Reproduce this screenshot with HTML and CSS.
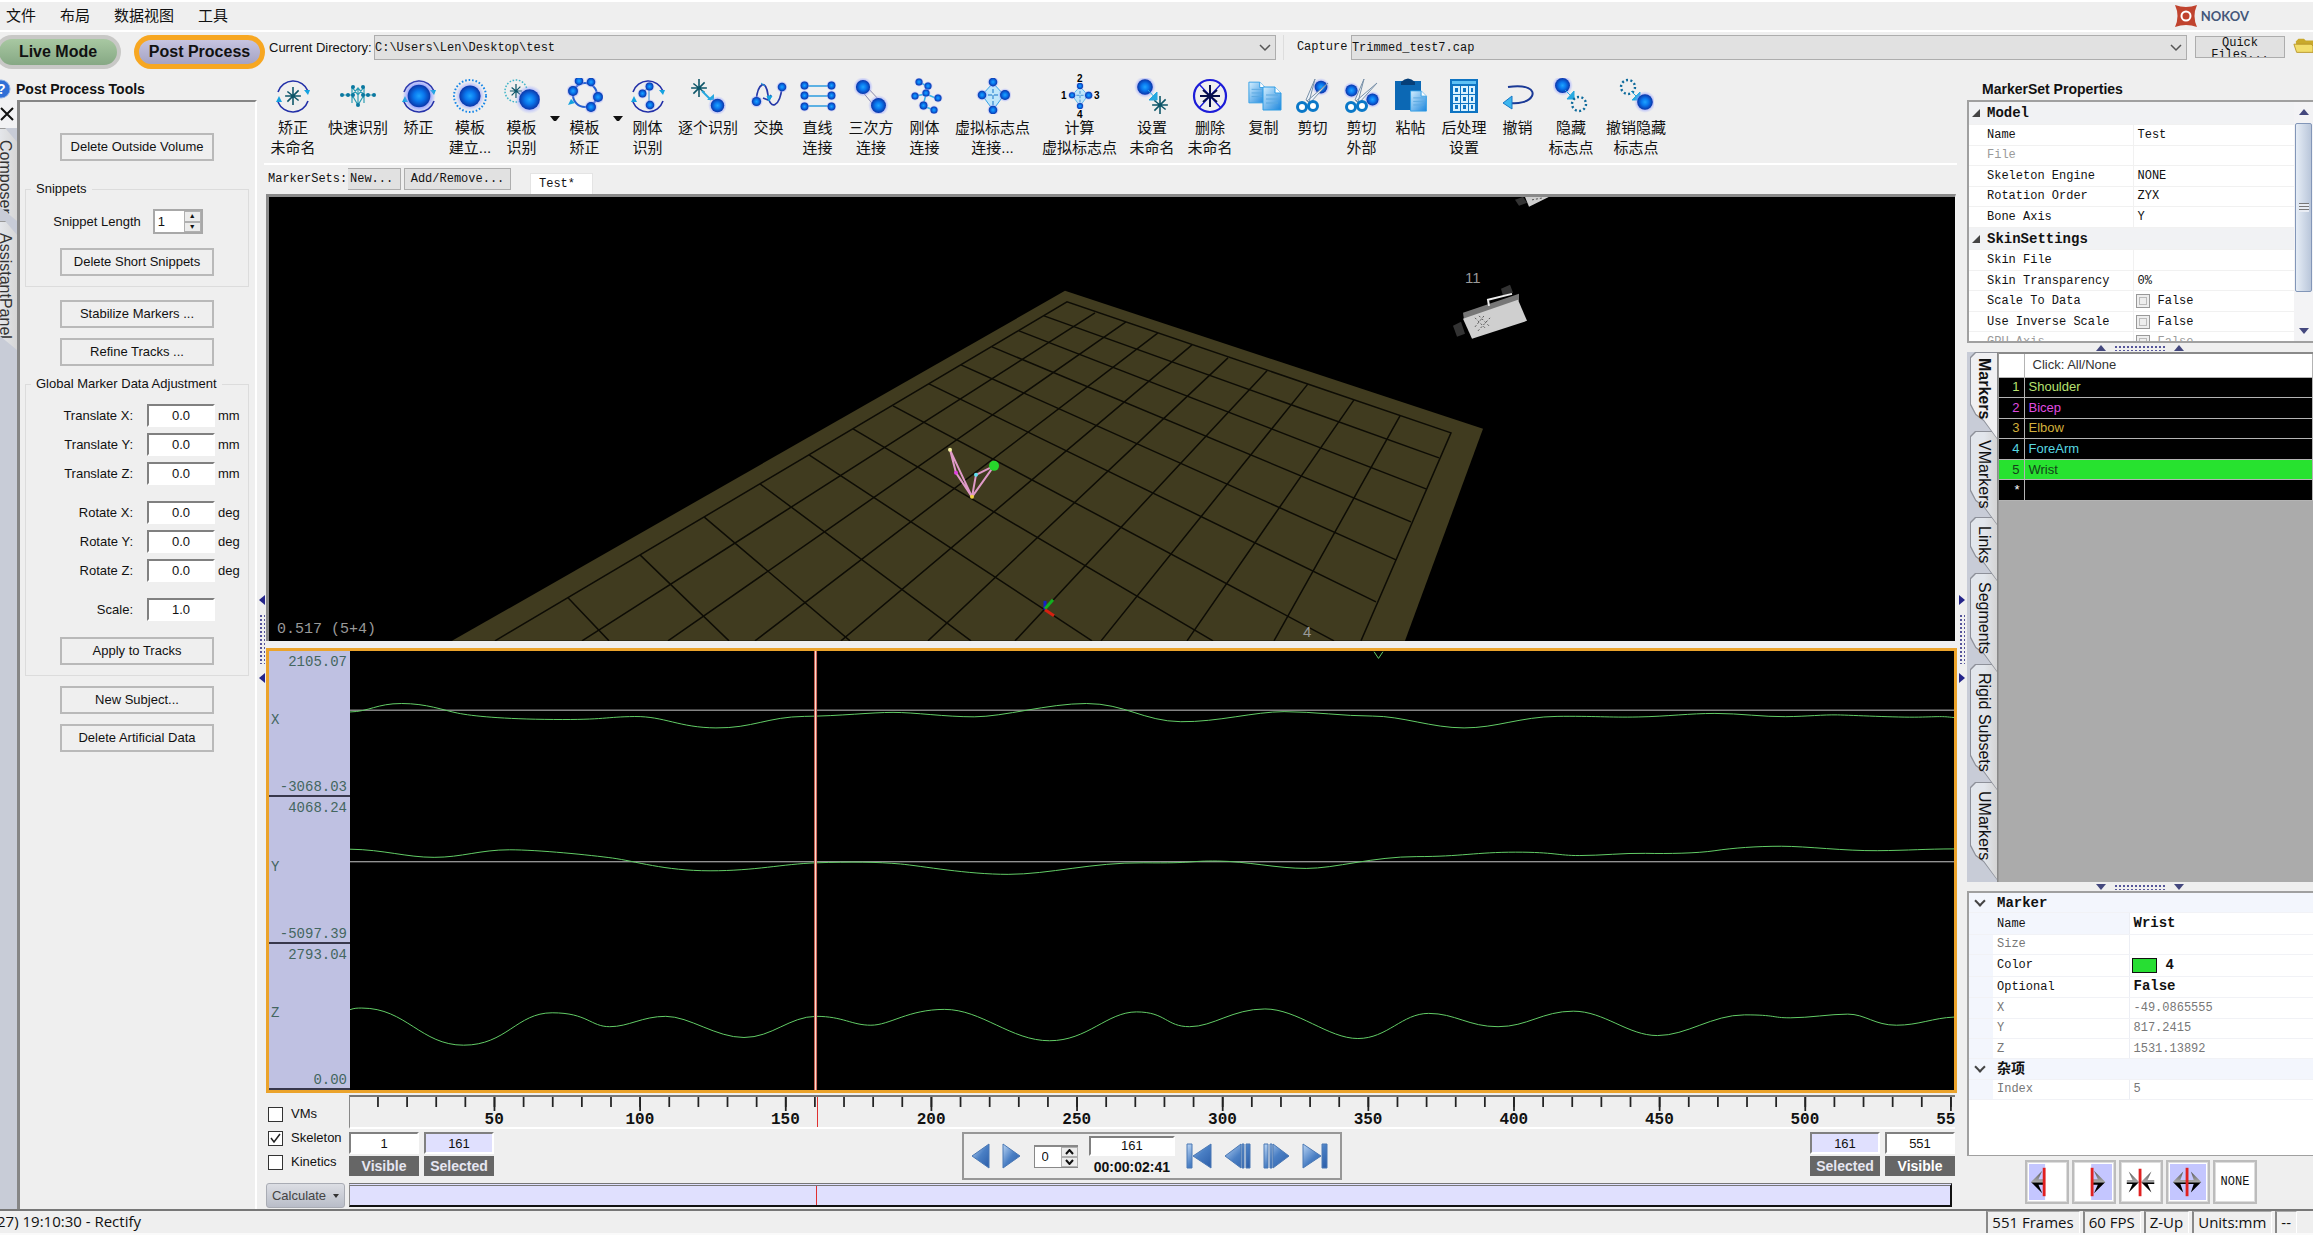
FILE: index.html
```html
<!DOCTYPE html>
<html lang="zh-CN">
<head>
<meta charset="utf-8">
<title>NOKOV Post Process</title>
<link rel="stylesheet" href="styles.css">
</head>
<body>
<svg class="defs" aria-hidden="true">
  <defs>
    <radialGradient id="ball"><stop offset="0" stop-color="#1ea4ff"/><stop offset=".45" stop-color="#0a78ee"/><stop offset="1" stop-color="#0a35a8"/></radialGradient>
    <radialGradient id="glow"><stop offset=".55" stop-color="#7f8cff" stop-opacity=".85"/><stop offset="1" stop-color="#a9b4ff" stop-opacity="0"/></radialGradient>
    <linearGradient id="sheet" x2="1" y2="1"><stop offset="0" stop-color="#d4efff"/><stop offset="1" stop-color="#1c86dd"/></linearGradient>
    <linearGradient id="play" x2="1" y2="1"><stop offset="0" stop-color="#bcd6f4"/><stop offset=".5" stop-color="#4a7fc4"/><stop offset="1" stop-color="#2b5da8"/></linearGradient>
    <linearGradient id="arrow" x2="0" y2="1"><stop offset="0" stop-color="#555"/><stop offset=".5" stop-color="#aaa"/><stop offset=".55" stop-color="#000"/></linearGradient>
    <symbol id="b" viewBox="-12 -12 24 24"><circle r="12" fill="url(#glow)"/><circle r="8.500" fill="url(#ball)"/></symbol>
    <symbol id="star" viewBox="-8 -8 16 16"><path d="M-7 0H7M0-8V8M-5 5L5-5M-5-4L5 4" stroke="#0d5568" stroke-width="1.4" fill="none"/></symbol>
    <symbol id="rot" viewBox="0 0 36 36"><path d="M3 14A16 16 0 0 1 33 13M33 23A16 16 0 0 1 3 24" fill="none" stroke="#2330a8" stroke-width="1.6"/><path d="M29 12h6l-2 5zM1 24h6L4 18z" fill="#14a2e0"/></symbol>
    <symbol id="i-fix" viewBox="0 0 36 36"><use href="#rot"/><use href="#star" x="9" y="9" width="18" height="18"/></symbol>
    <symbol id="i-quick" viewBox="0 0 36 36"><path d="M1 17H12L18 10L24 17H35M12 17L18 27L24 17M12 9L18 17L24 9M12 9V25M24 9V25M18 10V27" fill="none" stroke="#2d9db4" stroke-width="1.2"/><g fill="#0a78a0"><circle cx="2" cy="17" r="2"/><circle cx="8" cy="17" r="2"/><circle cx="13" cy="17" r="2"/><circle cx="23" cy="17" r="2"/><circle cx="28" cy="17" r="2"/><circle cx="34" cy="17" r="2"/><circle cx="13" cy="9" r="2"/><circle cx="23" cy="9" r="2"/><circle cx="18" cy="27" r="2"/></g></symbol>
    <symbol id="i-rect" viewBox="0 0 36 36"><circle cx="18" cy="18" r="17" fill="url(#glow)"/><use href="#rot"/><use href="#b" x="2" y="2" width="32" height="32"/></symbol>
    <symbol id="i-tpl" viewBox="0 0 36 36"><circle cx="18" cy="18" r="16" fill="none" stroke="#1686e8" stroke-width="2" stroke-dasharray="1.6 1.9"/><use href="#b" x="3" y="3" width="30" height="30"/></symbol>
    <symbol id="i-tplid" viewBox="0 0 36 36"><circle cx="12" cy="13" r="11" fill="none" stroke="#3db4c8" stroke-width="1.5" stroke-dasharray="1.6 1.6"/><use href="#star" x="5" y="6" width="14" height="14"/><use href="#b" x="11" y="7" width="29" height="29"/></symbol>
    <symbol id="i-ring" viewBox="0 0 36 36"><circle cx="18" cy="17" r="12" fill="none" stroke="#2660d0" stroke-width="2"/><use href="#b" x="6" y="-3" width="12" height="12"/><use href="#b" x="-1" y="6" width="14" height="14"/><use href="#b" x="18" y="-2" width="12" height="12"/><use href="#b" x="24" y="12" width="14" height="14"/><use href="#b" x="17" y="22" width="14" height="14"/><path d="M1 27l3-6 4 4z" fill="#14a2e0"/></symbol>
    <symbol id="i-rigid" viewBox="0 0 36 36"><use href="#rot"/><path d="M12 15L19 9V27" fill="none" stroke="#2d86d4"/><use href="#b" x="14" y="3" width="11" height="11"/><use href="#b" x="7" y="10" width="11" height="11"/><use href="#b" x="14" y="21" width="12" height="12"/></symbol>
    <symbol id="i-each" viewBox="0 0 36 36"><use href="#star" x="0" y="1" width="18" height="18"/><path d="M12 13L21 22" stroke="#25a8e0" stroke-width="2"/><path d="M17 22h7v-6z" fill="#25a8e0"/><use href="#b" x="18" y="18" width="19" height="19"/></symbol>
    <symbol id="i-swap" viewBox="0 0 36 36"><path d="M5 23C7 4 15 1 17 17S29 29 31 9M12 20l5 2 3-5" fill="none" stroke="#2638a8" stroke-width="1.7"/><path d="M14 8l-4-3M18 23l-2-5h5z" stroke="#14a2e0" fill="#14a2e0"/><use href="#b" x="-1" y="17" width="13" height="13"/><use href="#b" x="25" y="2" width="12" height="14"/></symbol>
    <symbol id="i-lines" viewBox="0 0 36 36"><path d="M4 8H32M4 18H32M4 28H32" stroke="#2d9de0" stroke-width="1.5"/><g><use href="#b" x="-1" y="2" width="11" height="11"/><use href="#b" x="-1" y="12" width="11" height="11"/><use href="#b" x="-1" y="23" width="11" height="11"/><use href="#b" x="26" y="2" width="11" height="11"/><use href="#b" x="26" y="12" width="11" height="11"/><use href="#b" x="26" y="23" width="11" height="11"/></g></symbol>
    <symbol id="i-cubic" viewBox="0 0 36 36"><path d="M8 12L23 30M13 8L28 24" stroke="#88a" /><use href="#b" x="0" y="-1" width="20" height="20"/><use href="#b" x="15" y="17" width="21" height="21"/></symbol>
    <symbol id="i-frag" viewBox="0 0 36 36"><path d="M12 4L22 9L19 16L8 18M19 16L31 21M19 16L16 28L27 32" fill="none" stroke="#35b2e8" stroke-width="1.5"/><use href="#b" x="7" y="-1" width="10" height="10"/><use href="#b" x="16" y="3" width="10" height="10"/><use href="#b" x="14" y="10" width="10" height="10"/><use href="#b" x="3" y="13" width="10" height="10"/><use href="#b" x="26" y="15" width="10" height="10"/><use href="#b" x="11" y="22" width="11" height="11"/><use href="#b" x="22" y="27" width="10" height="10"/></symbol>
    <symbol id="i-virt" viewBox="0 0 36 36"><path d="M18 5L29 17L18 32L7 17Z" fill="#bfe6fa" stroke="#35a2e8"/><path d="M18 5V32M7 17H29" stroke="#1673c8" stroke-dasharray="4 2"/><use href="#b" x="12" y="-2" width="12" height="12"/><use href="#b" x="1" y="11" width="12" height="12"/><use href="#b" x="23" y="10" width="14" height="14"/><use href="#b" x="12" y="26" width="12" height="12"/></symbol>
    <symbol id="i-set" viewBox="0 0 36 36"><use href="#b" x="0" y="-2" width="22" height="22"/><path d="M14 12L23 22M15 22h8v-8z" stroke="#25a8e0" fill="#25a8e0"/><use href="#star" x="17" y="18" width="18" height="18"/></symbol>
    <symbol id="i-del" viewBox="0 0 36 36"><circle cx="18" cy="18" r="16" fill="none" stroke="#1c1cd8" stroke-width="2.2"/><path d="M7 6L29 30M29 6L7 30" stroke="#1c1cd8" stroke-width="1.4"/><path d="M18 7V29M8 18H28M11 12L25 24M25 12L11 24" stroke="#06104a" stroke-width="2"/></symbol>
    <symbol id="page" viewBox="0 0 20 25"><path d="M1 1H13L19 7V24H1Z" fill="url(#sheet)" stroke="#2f9ce4"/><path d="M13 1V7H19" fill="#fff" stroke="#2f9ce4"/><path d="M4 9H16M4 13H16M4 17H16" stroke="#5aa8e0"/></symbol>
    <symbol id="i-copy" viewBox="0 0 36 36"><use href="#page" x="2" y="3" width="18" height="23"/><use href="#page" x="16" y="8" width="20" height="25"/></symbol>
    <symbol id="sc" viewBox="0 0 36 36"><path d="M20 1L14 24L11 22Z M33 5L15 25L12 23Z" fill="#eef4fa" stroke="#7890a8"/><circle cx="7" cy="29" r="4.5" fill="#fff" stroke="#0a78c8" stroke-width="3"/><circle cx="18" cy="28" r="4.5" fill="#fff" stroke="#0a78c8" stroke-width="3"/></symbol>
    <symbol id="i-cut" viewBox="0 0 36 36"><use href="#b" x="17" y="0" width="18" height="18"/><use href="#sc"/></symbol>
    <symbol id="i-cutout" viewBox="0 0 36 36"><use href="#b" x="-1" y="4" width="17" height="17"/><use href="#b" x="20" y="13" width="17" height="17"/><use href="#sc"/></symbol>
    <symbol id="i-paste" viewBox="0 0 36 36"><path d="M2 3H28V32H2Z" fill="#0c68b4"/><path d="M8 7V4Q15-3 22 4V7Z" fill="#063f78"/><use href="#page" x="16" y="12" width="19" height="22"/></symbol>
    <symbol id="i-cfg" viewBox="0 0 36 36"><path d="M4 1H32V35H4Z" fill="#0e74c2"/><path d="M6 3H30V6H6Z" fill="#5ec0f4"/><g fill="#d8f2ff"><path d="M7 8H14V16H7ZM15 8H22V16H15ZM23 8H29V16H23ZM7 17H14V25H7ZM15 17H22V25H15ZM23 17H29V25H23ZM7 26H14V33H7ZM15 26H22V33H15ZM23 26H29V33H23Z"/></g><path d="M9 12h3M17 12h3M25 12h2M9 21h3M17 21h3M25 21h2M9 29h3M17 29h3M25 29h2" stroke="#0e74c2" stroke-width="4"/></symbol>
    <symbol id="i-undo" viewBox="0 0 36 36"><path d="M8 9C27 6 35 12 32 18S18 26 10 25" fill="none" stroke="#1b3a96" stroke-width="2"/><path d="M3 25L12 18V31Z" fill="#3db6ee" stroke="#1678c8"/></symbol>
    <symbol id="i-hide" viewBox="0 0 36 36"><use href="#b" x="-1" y="-3" width="21" height="21"/><path d="M14 21h7v-8zM12 12l7 7" fill="#25a8e0" stroke="#25a8e0"/><circle cx="26" cy="26" r="7" fill="none" stroke="#0d6a9c" stroke-width="2.4" stroke-dasharray="2 2.4"/></symbol>
    <symbol id="i-show" viewBox="0 0 36 36"><circle cx="10" cy="9" r="7" fill="none" stroke="#0d6a9c" stroke-width="2.4" stroke-dasharray="2 2.4"/><path d="M14 22h8v-8zM13 13l7 7" fill="#25a8e0" stroke="#25a8e0"/><use href="#b" x="16" y="13" width="22" height="22"/></symbol>
  </defs>
</svg>

<nav class="menubar">
  <button>文件</button><button>布局</button><button>数据视图</button><button>工具</button>
  <div class="brand">
    <svg width="24" height="24" viewBox="0 0 24 24"><path d="M1 1Q12 5 23 1Q18 12 23 23Q12 19 1 23Q6 12 1 1Z" fill="#c0432e"/><circle cx="12" cy="12" r="4.5" fill="none" stroke="#fff" stroke-width="2"/></svg>
    <span>NOKOV</span>
  </div>
</nav>

<div class="topbar">
  <div class="modes"><button class="mode live">Live Mode</button><button class="mode post">Post Process</button></div>
  <label class="dir-label" for="dir">Current Directory:</label>
  <select id="dir" class="combo"><option>C:\Users\Len\Desktop\test</option></select>
  <label class="cap-label" for="cap">Capture</label>
  <select id="cap" class="combo"><option>Trimmed_test7.cap</option></select>
  <button class="quick">Quick<br>Files...</button>
  <svg class="folder" width="22" height="18" viewBox="0 0 22 18"><path d="M3 4L6 1H12L14 3H22V16H5Z" fill="#c9a92c"/><path d="M1 7H20L22 9V16H4Z" fill="#f2dd6a" stroke="#b8962a"/></svg>
</div>

<main class="work">
  <section class="left">
    <h2><svg width="20" height="20" viewBox="0 0 20 20"><circle cx="10" cy="10" r="9" fill="#2f6fd6" stroke="#8aaee6"/><text x="6" y="15" fill="#fff" class="qm">?</text></svg>Post Process Tools</h2>
    <div class="tools">
      <div class="ltabs">
        <button class="close" aria-label="Close"><svg width="14" height="14" viewBox="0 0 14 14"><path d="M1 1L13 13M13 1L1 13" stroke="#111" stroke-width="2"/></svg></button>
        <button class="vtab t1">Composer</button><button class="vtab t2">AssistantPanel</button>
      </div>
      <form class="panel">
        <button type="button" class="btn">Delete Outside Volume</button>
        <fieldset class="snip"><legend>Snippets</legend>
          <div class="len"><label for="sl">Snippet Length</label><span class="spin"><input id="sl" value="1"><span class="ud"><button type="button">▲</button><button type="button">▼</button></span></span></div>
          <button type="button" class="btn">Delete Short Snippets</button>
        </fieldset>
        <button type="button" class="btn">Stabilize Markers ...</button>
        <button type="button" class="btn">Refine Tracks ...</button>
        <fieldset class="adj"><legend>Global Marker Data Adjustment</legend>
          <div class="f"><label for="tx">Translate X:</label><input id="tx" value="0.0"><span>mm</span></div>
          <div class="f"><label for="ty">Translate Y:</label><input id="ty" value="0.0"><span>mm</span></div>
          <div class="f last"><label for="tz">Translate Z:</label><input id="tz" value="0.0"><span>mm</span></div>
          <div class="f"><label for="rx">Rotate X:</label><input id="rx" value="0.0"><span>deg</span></div>
          <div class="f"><label for="ry">Rotate Y:</label><input id="ry" value="0.0"><span>deg</span></div>
          <div class="f last"><label for="rz">Rotate Z:</label><input id="rz" value="0.0"><span>deg</span></div>
          <div class="f last"><label for="sc-in">Scale:</label><input id="sc-in" value="1.0"></div>
          <button type="button" class="btn">Apply to Tracks</button>
        </fieldset>
        <button type="button" class="btn">New Subject...</button>
        <button type="button" class="btn">Delete Artificial Data</button>
      </form>
    </div>
  </section>

  <div class="vsplit"><i class="tri tl"></i><i class="dots"></i><i class="tri tl"></i></div>

  <section class="center">
    <div class="toolbar">
      <button class="tool c3"><svg><use href="#i-fix"/></svg>矫正<br>未命名</button>
      <button class="tool c4"><svg><use href="#i-quick"/></svg>快速识别</button>
      <button class="tool c2"><svg><use href="#i-rect"/></svg>矫正</button>
      <button class="tool cd"><svg><use href="#i-tpl"/></svg>模板<br>建立...</button>
      <button class="tool c2"><svg><use href="#i-tplid"/></svg>模板<br>识别</button>
      <button class="more" aria-label="More"></button>
      <button class="tool c2"><svg><use href="#i-ring"/></svg>模板<br>矫正</button>
      <button class="more" aria-label="More"></button>
      <button class="tool c2"><svg><use href="#i-rigid"/></svg>刚体<br>识别</button>
      <button class="tool c4"><svg><use href="#i-each"/></svg>逐个识别</button>
      <button class="tool c2"><svg><use href="#i-swap"/></svg>交换</button>
      <button class="tool c2"><svg><use href="#i-lines"/></svg>直线<br>连接</button>
      <button class="tool c3"><svg><use href="#i-cubic"/></svg>三次方<br>连接</button>
      <button class="tool c2"><svg><use href="#i-frag"/></svg>刚体<br>连接</button>
      <button class="tool c5"><svg><use href="#i-virt"/></svg>虚拟标志点<br>连接...</button>
      <button class="tool c5"><svg class="num" viewBox="0 0 36 36"><use href="#i-virt" x="5" y="5" width="26" height="26"/><text x="15" y="4">2</text><text x="-1" y="21">1</text><text x="32" y="21">3</text><text x="15" y="40">4</text></svg>计算<br>虚拟标志点</button>
      <button class="tool c3"><svg><use href="#i-set"/></svg>设置<br>未命名</button>
      <button class="tool c3"><svg><use href="#i-del"/></svg>删除<br>未命名</button>
      <button class="tool c2"><svg><use href="#i-copy"/></svg>复制</button>
      <button class="tool c2"><svg><use href="#i-cut"/></svg>剪切</button>
      <button class="tool c2"><svg><use href="#i-cutout"/></svg>剪切<br>外部</button>
      <button class="tool c2"><svg><use href="#i-paste"/></svg>粘帖</button>
      <button class="tool c3"><svg><use href="#i-cfg"/></svg>后处理<br>设置</button>
      <button class="tool c2"><svg><use href="#i-undo"/></svg>撤销</button>
      <button class="tool c3"><svg><use href="#i-hide"/></svg>隐藏<br>标志点</button>
      <button class="tool c4"><svg><use href="#i-show"/></svg>撤销隐藏<br>标志点</button>
    </div>
    <div class="sets"><span class="sets-label">MarkerSets:</span><button class="new">New...</button><button class="add">Add/Remove...</button><button class="set-tab">Test*</button></div>

    <div class="view3d">
      <svg viewBox="0 0 1686 444" preserveAspectRatio="xMidYMid slice">
        <path d="M796 94L1214 232L1136 444H183Z" fill="#403b1f"/>
        <g stroke="#0d0c05" stroke-width="1.5" fill="none">
          <path d="M226 444L798 105L1182 236L1092 444M826 116L313 444M857 125L399 444M889 136L486 444M923 148L572 444M959 161L659 444M998 174L746 444M1039 187L832 444M1085 203L918 444M1131 219L1005 444"/>
          <path d="M775 119L1170 261M750 134L1157 292M723 150L1142 325M692 168L1127 363M660 187L1107 405M624 209L1065 444M584 232L944 444M540 258L823 444M491 287L702 444M435 320L581 444M371 358L460 444M299 401L340 444"/>
        </g>
        <path d="M681 253L687 276L703 300ZM703 300L707 278L725 269Z" fill="none" stroke="#e09ac8" stroke-width="2"/>
        <g><circle cx="681" cy="253" r="2" fill="#f4f0a0"/><circle cx="687" cy="276" r="2" fill="#e040e0"/><circle cx="703" cy="300" r="2" fill="#f0d040"/><circle cx="707" cy="278" r="2" fill="#60e0f0"/><circle cx="725" cy="269" r="5" fill="#27d62c"/></g>
        <g stroke-width="3"><path d="M776 413V404" stroke="#1520c8"/><path d="M776 412L784 403" stroke="#12b020"/><path d="M776 413L785 419" stroke="#d82010"/></g>
        <g><path d="M1184 129L1192 125L1196 137L1188 140Z" fill="#333"/><path d="M1232 92L1241 88L1244 96L1234 99Z" fill="#333"/><path d="M1194 116L1250 97V104L1195 123Z" fill="#777"/><path d="M1194 122L1249 103L1258 124L1203 142Z" fill="#cfcfcf"/><path d="M1220 109L1219 103L1243 97" fill="none" stroke="#eee" stroke-width="2"/><path d="M1206 121L1217 132M1210 119L1221 130M1206 130L1215 119M1209 134L1221 121" stroke="#555" stroke-dasharray="2 2"/>
        <path d="M1246 3L1254 0L1258 6L1250 9Z" fill="#333"/><path d="M1256 0H1280L1260 10Z" fill="#cfcfcf"/><path d="M1263 3L1274 1" stroke="#555" stroke-dasharray="2 2"/></g>
        <g class="scene-text"><text x="1196" y="86">11</text><text x="1034" y="440">4</text></g>
      </svg>
      <span class="readout">0.517 (5+4)</span>
    </div>

    <div class="plot">
      <div class="axes">
        <div><span>2105.07</span><b>X</b><span>-3068.03</span></div>
        <div><span>4068.24</span><b>Y</b><span>-5097.39</span></div>
        <div><span>2793.04</span><b>Z</b><span>0.00</span></div>
      </div>
      <div class="curves">
        <svg viewBox="237 441 1087 297" preserveAspectRatio="none">
          <path class="base" d="M237 481H1324M237 583.5H1324"/>
          <path class="curve" d="M237 482.2C250 482 255 476.5 272 476.5S300 481 310 483S340 487 375 487.3S410 485.5 430 485.3S460 492.8 485 493S520 485.5 545 485.2S590 482.5 605 482.5S640 485.5 660 485.5S710 476.5 736 476.5S775 488.5 800 488.8S850 482 870 482S910 485 930 485S970 493 992 493S1030 485.5 1055 485.2S1090 486 1110 485.6S1145 483.2 1162 483.2S1195 485.6 1210 485.4S1235 484 1245 484.2S1285 486 1300 485.7S1315 485 1324 486"/>
          <path class="curve" d="M237 575C260 575.3 275 580.5 294 580.5S325 575.4 345 575.4S400 579 415 581S450 589.6 481 589.6S530 585 553 584.2S595 583.6 610 585S655 592 683 592S740 583.8 775 584.2S805 582.8 825 583S865 588 885 588S930 580 960 580S1000 577 1027 577S1055 579.3 1070 579.3S1100 577.5 1115 577.8S1150 577.8 1162 576S1190 573 1207 573S1250 576.2 1272 576S1305 574.8 1324 574.8"/>
          <path class="curve" d="M237 683.5C240 682.4 242 682.4 245 682.4C275 682.4 285 707.500 314 707.500S350 685.6 374 685.6S400 695 413 695S435 688 451 688S485 702.3 504 702.3S535 688 553 688S577 694 590 694S615 683.3 640 683.3S685 704.500 711 704.500S750 685 770 685S790 695 806 695S835 683 857 683S900 703 920 703S950 686 968 686S995 695 1015 695S1045 684.5 1066 684.5S1103 701 1123 701S1160 687 1182 687S1200 689 1213 689S1240 686.5 1252 686.5S1270 694 1285 694S1310 689 1324 688.5"/>
          <path class="curve" d="M931 441.5L934 446L937 441.5"/>
          <path class="cursor-r" d="M552.500 441V738"/><path class="cursor-w" d="M552.500 441V738"/>
        </svg>
      </div>
    </div>

    <div class="deck">
      <div class="checks">
        <label><input type="checkbox">VMs</label>
        <label><input type="checkbox" checked>Skeleton</label>
        <label><input type="checkbox">Kinetics</label>
        <button class="calc">Calculate<i></i></button>
      </div>
      <div class="time">
        <div class="ruler">
          <svg viewBox="0.500 0 551 14" preserveAspectRatio="none"><path d="M9.8 5H551" stroke="#222" stroke-width="10" stroke-dasharray=".6 9.4"/><path d="M49.8 7H551" stroke="#222" stroke-width="14" stroke-dasharray=".6 49.4"/></svg>
          <span style="left:8.98%">50</span><span style="left:18.06%">100</span><span style="left:27.13%">150</span><span style="left:36.21%">200</span><span style="left:45.28%">250</span><span style="left:54.36%">300</span><span style="left:63.43%">350</span><span style="left:72.51%">400</span><span style="left:81.58%">450</span><span style="left:90.65%">500</span><span style="left:99.73%">550</span>
          <i class="now" style="left:29.1%"></i>
        </div>
        <div class="row">
          <div class="pair"><input aria-label="First visible frame" value="1"><button>Visible</button></div>
          <div class="pair sel"><input aria-label="First selected frame" value="161"><button>Selected</button></div>
          <div class="transport">
            <button aria-label="Play backward"><svg width="20" height="26" viewBox="0 0 20 26"><path d="M18 1V25L1 13Z" fill="url(#play)" stroke="#4a78b4"/></svg></button>
            <button aria-label="Play forward"><svg width="20" height="26" viewBox="0 0 20 26"><path d="M1 1V25L18 13Z" fill="url(#play)" stroke="#4a78b4"/></svg></button>
            <span class="spin speed"><input aria-label="Speed" value="0"><span class="ud"><button aria-label="Faster"><svg width="9" height="6" viewBox="0 0 9 6"><path d="M1 5L4.500 1L8 5" fill="none" stroke="#111" stroke-width="2"/></svg></button><button aria-label="Slower"><svg width="9" height="6" viewBox="0 0 9 6"><path d="M1 1L4.500 5L8 1" fill="none" stroke="#111" stroke-width="2"/></svg></button></span></span>
            <div class="clock"><input aria-label="Current frame" value="161"><b>00:00:02:41</b></div>
            <button aria-label="First"><svg width="27" height="26" viewBox="0 0 27 26"><path d="M1 1H6V25H1ZM25 1V25L7 13Z" fill="url(#play)" stroke="#4a78b4"/></svg></button>
            <button aria-label="Previous"><svg width="27" height="26" viewBox="0 0 27 26"><path d="M17 1V25L1 13ZM18 1H20V25H18ZM22 1H26V25H22Z" fill="url(#play)" stroke="#4a78b4"/></svg></button>
            <button aria-label="Next"><svg width="27" height="26" viewBox="0 0 27 26"><path d="M10 1V25L26 13ZM7 1H9V25H7ZM1 1H5V25H1Z" fill="url(#play)" stroke="#4a78b4"/></svg></button>
            <button aria-label="Last"><svg width="27" height="26" viewBox="0 0 27 26"><path d="M2 1V25L20 13ZM21 1H26V25H21Z" fill="url(#play)" stroke="#4a78b4"/></svg></button>
          </div>
          <div class="pair sel"><input aria-label="Last selected frame" value="161"><button>Selected</button></div>
          <div class="pair end"><input aria-label="Last visible frame" value="551"><button>Visible</button></div>
        </div>
        <div class="range"><i class="now" style="left:29.1%"></i></div>
      </div>
    </div>
  </section>

  <div class="vsplit"><i class="tri tr"></i><i class="dots"></i><i class="tri tr"></i></div>

  <aside class="right">
    <h2>MarkerSet Properties</h2>
    <div class="props">
      <table class="ptable">
        <tr class="cat"><th colspan="2"><i></i>Model</th></tr>
        <tr><td>Name</td><td>Test</td></tr>
        <tr class="dim"><td>File</td><td></td></tr>
        <tr><td>Skeleton Engine</td><td>NONE</td></tr>
        <tr><td>Rotation Order</td><td>ZYX</td></tr>
        <tr><td>Bone Axis</td><td>Y</td></tr>
        <tr class="cat"><th colspan="2"><i></i>SkinSettings</th></tr>
        <tr><td>Skin File</td><td></td></tr>
        <tr><td>Skin Transparency</td><td>0%</td></tr>
        <tr><td>Scale To Data</td><td class="ck"><label><input type="checkbox">False</label></td></tr>
        <tr><td>Use Inverse Scale</td><td class="ck"><label><input type="checkbox">False</label></td></tr>
        <tr class="dim"><td>GPU Axis</td><td class="ck"><label><input type="checkbox">False</label></td></tr>
      </table>
      <div class="scroll"><i class="tri tu"></i><div class="thumb"></div><i class="tri td"></i></div>
    </div>
    <div class="hsplit"><i class="tri tu"></i><i class="dots"></i><i class="tri tu"></i></div>
    <div class="markers">
      <div class="rtabs">
        <button class="rtab on">Markers</button><button class="rtab">VMarkers</button><button class="rtab">Links</button><button class="rtab">Segments</button><button class="rtab">Rigid Subsets</button><button class="rtab">UMarkers</button>
      </div>
      <div class="list">
        <table class="mtable">
          <tr><th></th><th>Click: All/None</th></tr>
          <tr class="m1"><td>1</td><td>Shoulder</td></tr>
          <tr class="m2"><td>2</td><td>Bicep</td></tr>
          <tr class="m3"><td>3</td><td>Elbow</td></tr>
          <tr class="m4"><td>4</td><td>ForeArm</td></tr>
          <tr class="m5"><td>5</td><td>Wrist</td></tr>
          <tr class="m6"><td>*</td><td></td></tr>
        </table>
      </div>
    </div>
    <div class="hsplit"><i class="tri td"></i><i class="dots"></i><i class="tri td"></i></div>
    <div class="detail">
      <table class="dtable">
        <colgroup><col class="gut"><col class="key"><col></colgroup>
        <tr class="cat"><td><i></i></td><th colspan="2">Marker</th></tr>
        <tr class="cur"><td></td><td>Name</td><td><b>Wrist</b></td></tr>
        <tr class="dim"><td></td><td>Size</td><td></td></tr>
        <tr><td></td><td>Color</td><td class="sw"><i></i><b>4</b></td></tr>
        <tr><td></td><td>Optional</td><td><b>False</b></td></tr>
        <tr class="dim"><td></td><td>X</td><td>-49.0865555</td></tr>
        <tr class="dim"><td></td><td>Y</td><td>817.2415</td></tr>
        <tr class="dim"><td></td><td>Z</td><td>1531.13892</td></tr>
        <tr class="cat"><td><i></i></td><th colspan="2">杂项</th></tr>
        <tr class="dim"><td></td><td>Index</td><td>5</td></tr>
      </table>
    </div>
    <div class="cuts">
      <button aria-label="Left"><svg viewBox="0 0 38 38"><path d="M0 0H17V38H0Z" fill="#c4c6ff"/><path d="M2 19L14 7L10 16H16V22H10L14 31Z" fill="url(#arrow)"/><path d="M16 4V34" stroke="#e02020" stroke-width="3"/></svg></button>
      <button aria-label="Right"><svg viewBox="0 0 38 38"><path d="M16 0H38V38H16Z" fill="#c4c6ff"/><path d="M31 19L19 7L23 16H18V22H23L19 31Z" fill="url(#arrow)"/><path d="M17 4V34" stroke="#e02020" stroke-width="3"/></svg></button>
      <button aria-label="Inward"><svg viewBox="0 0 38 38"><path d="M17 19L6 8L10 17H4V21H10L6 30ZM19 19L30 8L26 17H33V21H26L30 30Z" fill="url(#arrow)"/><path d="M18 5V34" stroke="#e02020" stroke-width="3"/></svg></button>
      <button aria-label="Both"><svg viewBox="0 0 38 38"><path d="M0 0H38V38H0Z" fill="#c4c6ff"/><path d="M3 19L14 8L11 17H25L22 8L33 19L22 30L25 21H11L14 30Z" fill="url(#arrow)"/><path d="M18 4V34" stroke="#e02020" stroke-width="3"/></svg></button>
      <button>NONE</button>
    </div>
  </aside>
</main>

<footer class="status">
  <span class="log">27) 19:10:30 - Rectify</span>
  <span>551 Frames</span><span>60 FPS</span><span>Z-Up</span><span>Units:mm</span><span>--</span>
</footer>
</body>
</html>
```
FILE: styles.css
```css
:root {
  --mono: "Liberation Mono", "Noto Sans CJK SC", monospace;
  --sans: "Liberation Sans", "Noto Sans CJK SC", sans-serif;
}
* { box-sizing: border-box; }
body {
  margin: 0;
  height: 100vh;
  min-height: 900px;
  display: flex;
  flex-direction: column;
  background: #efefef;
  color: #111;
  font: 13px/16px var(--sans);
  overflow: hidden;
}
button, input, select { font: inherit; color: inherit; margin: 0; padding: 0; border-radius: 0; }
button { border: 0; background: none; white-space: nowrap; }
svg { display: block; flex: none; }
table { border-collapse: collapse; }
h2 { margin: 0; font-size: 14px; font-weight: bold; height: 32px; display: flex; align-items: center; padding-top: 10px; }
.defs { position: absolute; width: 0; height: 0; }

/* Menu and top bar */
.menubar {
  height: 32px;
  flex: none;
  display: flex;
  align-items: center;
  gap: 24px;
  padding-left: 6px;
  border-top: 2px solid #fff;
  border-bottom: 2px solid #fff;
  font-size: 15px;
}
.brand { margin-left: auto; margin-right: 64px; display: flex; align-items: center; gap: 3px; font: bold 13px Lato, sans-serif; color: #44577a; }
.topbar { height: 36px; flex: none; display: flex; align-items: flex-start; padding-top: 3px; }
.modes { width: 269px; flex: none; display: flex; justify-content: space-between; padding-right: 4px; }
.mode { height: 34px; font-size: 16px; font-weight: bold; border-radius: 17px; }
.live { width: 126px; margin-left: -5px; border: 4px solid #c8c8c6; background: linear-gradient(#a8c8a2, #86a884); }
.post { width: 131px; border: 5px solid #f7a722; background: linear-gradient(#c6c4e0, #a5a3c4); }
.dir-label { width: 105px; flex: none; line-height: 25px; }
.combo {
  flex: 902 1 0;
  min-width: 0;
  height: 25px;
  border: 1px solid #adadad;
  padding-left: 0;
  font: 12px var(--mono);
  appearance: none;
  background: #e1e1e1 url("data:image/svg+xml,%3Csvg xmlns='http://www.w3.org/2000/svg' width='12' height='8'%3E%3Cpath d='M1 1L6 6L11 1' fill='none' stroke='%23555' stroke-width='1.5'/%3E%3C/svg%3E") no-repeat right 4px center;
}
#cap { flex-grow: 836; }
.cap-label { font: 12px/25px var(--mono); flex: none; margin-left: 7px; border-left: 1px solid #ddd; padding-left: 13px; width: 68px; }
.quick { width: 90px; flex: none; height: 22px; margin: 1px 8px 0; border: 1px solid #adadad; background: #e1e1e1; font: 12px/12px var(--mono); overflow: hidden; display: flex; justify-content: center; align-items: flex-start; }
.folder { margin-top: 2px; width: 20px; }

/* Main columns */
.work { flex: 1; min-height: 0; display: grid; grid-template-columns: 257px 9px minmax(0, 1fr) 10px 346px; grid-template-rows: minmax(0, 1fr); }
.left, .center, .right { display: flex; flex-direction: column; min-height: 0; min-width: 0; }

.left h2 { gap: 5px; }
.left h2 svg { margin-left: -9px; }
.qm { font: bold 14px var(--sans); }
.tools { flex: 1; display: flex; min-height: 0; }
.ltabs { width: 20px; display: flex; flex-direction: column; align-items: flex-start; background: #c8ccd7; border-right: 3px solid #868686; }
.close { width: 17px; height: 28px; background: #f2f2f4; display: flex; align-items: center; justify-content: center; padding-right: 4px; }
.vtab {
  writing-mode: vertical-rl;
  width: 17px;
  font-size: 16px;
  line-height: 16px;
  text-align: left;
  padding: 11px 4px 0 0;
  color: #333;
  background: linear-gradient(90deg, #e4e6ea, #d6d6d6);
  border-top: 1px solid #999;
  clip-path: polygon(0 0, 30% 0, 100% 14px, 100% 100%, 0 calc(100% - 14px));
}
.t1 { height: 93px; }
.t2 { height: 129px; }
.panel { flex: 1; border-top: 2px solid #868686; border-right: 2px solid #fff; padding: 31px 6px 0 5px; display: flex; flex-direction: column; align-items: center; }
.panel fieldset { width: 100%; padding: 0; border: 1px solid #dcdcdc; display: flex; flex-direction: column; align-items: center; min-width: 0; }
.panel legend { padding: 0 5px; margin-left: 5px; }
.btn { width: 154px; height: 28px; flex: none; border: 2px solid #b9b9b9; background: #efefef; margin-bottom: 10px; }
.panel .snip { height: 106px; margin: 10px 0 13px; }
.len { display: flex; align-items: center; gap: 12px; height: 25px; margin: 12px 0 14px; padding-right: 18px; }
.spin { display: flex; background: #fff; border: 2px solid #a8a8a8; }
.spin input { border: 0; outline: 0; background: #fff; width: 29px; padding-left: 3px; }
.len .spin { width: 50px; height: 25px; }
.ud { display: flex; flex-direction: column; width: 17px; flex: none; }
.ud button { flex: 1; font-size: 7px; line-height: 8px; background: #ececec; border: 1px solid #b0b0b0; display: flex; align-items: center; justify-content: center; overflow: hidden; }
.panel .adj { margin: 0 0 10px; }
.adj legend { margin-bottom: 12px; }
.f { display: grid; grid-template-columns: 107px 68px auto; column-gap: 14px; width: 100%; height: 23px; margin-bottom: 6px; align-items: center; }
.f.last { margin-bottom: 16px; }
.f label { text-align: right; }
.f input, .pair input, .clock input { height: 23px; text-align: center; border: 2px solid; border-color: #808080 #fff #fff #808080; background: #fff; }
.f span { margin-left: -11px; }

/* Splitters */
.vsplit { display: flex; flex-direction: column; align-items: center; gap: 9px; padding-top: 527px; }
.vsplit .dots { width: 6px; height: 50px; }
.dots { background: radial-gradient(circle, #55559a 1px, transparent 1px) 0 0 / 4px 4px; }
.tri { width: 0; height: 0; border: 5px solid transparent; flex: none; }
.tl { border-right: 6px solid #24248a; border-left: 0; }
.tr { border-left: 6px solid #24248a; border-right: 0; }
.tu { border-bottom: 6px solid #44487e; border-top: 0; }
.td { border-top: 6px solid #44487e; border-bottom: 0; }
.hsplit { height: 9px; flex: none; display: flex; justify-content: center; align-items: center; gap: 8px; }
.hsplit .dots { width: 52px; height: 6px; }

/* Toolbar */
.toolbar { display: flex; align-items: flex-start; height: 97px; flex: none; margin-left: -2px; padding-top: 10px; border-bottom: 2px solid #fff; }
.tool { display: block; flex: none; font: 15px/20px var(--sans); color: #111; text-align: center; }
.tool svg { width: 36px; height: 36px; margin: 0 auto 4px; overflow: visible; }
.c2 { width: 49px; } .c3 { width: 58px; } .c4 { width: 72px; } .c5 { width: 87px; } .cd { width: 54px; }
.num text { font: bold 10px var(--sans); }
.more { width: 14px; height: 60px; flex: none; }
.more::after { content: ""; display: block; border: 4px solid transparent; border-top: 5px solid #111; border-bottom: 0; margin: 20px 0 0 4px; }
.sets { height: 29px; flex: none; display: flex; align-items: flex-start; padding: 3px 0 0 2px; font: 12px var(--mono); }
.sets button { height: 22px; border: 1px solid #adadad; background: #e1e1e1; font: 12px var(--mono); }
.sets-label { position: relative; background: #efefef; width: 80px; line-height: 22px; flex: none; }
.sets .new { width: 57px; margin: 0 3px 0 -4px; text-align: left; padding-left: 5px; }
.sets .add { width: 107px; }
.sets .set-tab { margin: 5px 0 0 19px; width: 63px; height: 21px; background: #fff; border-color: #e4e4e4; text-align: left; padding-left: 8px; border-bottom: 0; }

/* Views */
.view3d { flex: 101 1 0; min-height: 0; margin-right: 1px; position: relative; background: #000; border: 3px solid #8a8a8a; border-right: 1px solid #f2f2f2; border-bottom: 0; }
.view3d svg { position: absolute; inset: 0; width: 100%; height: 100%; }
.scene-text { font: 15px var(--sans); fill: #999; }
.readout { position: absolute; left: 8px; bottom: 2px; font: 15px/18px var(--mono); color: #999; }
.plot { flex: 100 1 0; min-height: 0; margin-top: 7px; border: 3px solid #eba32b; display: flex; }
.axes { width: 81px; flex: none; display: flex; flex-direction: column; background: #bfc1e2; font: 14px/16px var(--mono); color: #44665f; }
.axes div { flex: 1; display: flex; flex-direction: column; justify-content: space-between; border-bottom: 2px solid #38384c; padding: 3px 3px 0 2px; }
.axes span { text-align: right; }
.axes b { margin-bottom: 8px; font-weight: normal; }
.curves { flex: 1; position: relative; background: #000; }
.curves svg { position: absolute; inset: 0; width: 100%; height: 100%; }
.curves path { fill: none; vector-effect: non-scaling-stroke; }
.base { stroke: #c8c8c8; stroke-width: 1px; }
.curves .curve { stroke: #62cc66; stroke-width: 1px; }
.cursor-r { stroke: #cc6054; stroke-width: 3px; }
.cursor-w { stroke: #fbe4d4; stroke-width: 1px; }

/* Timeline deck */
.deck { flex: none; height: 116px; display: flex; padding-top: 2px; }
.checks { width: 83px; flex: none; display: flex; flex-direction: column; padding: 7px 4px 0 0; }
.checks label { display: flex; align-items: center; gap: 8px; height: 24px; padding-left: 2px; }
input[type="checkbox"] { appearance: none; width: 15px; height: 15px; border: 1px solid #333; background: #fff; flex: none; }
.checks input:checked { background: #fff url("data:image/svg+xml,%3Csvg xmlns='http://www.w3.org/2000/svg' width='13' height='13'%3E%3Cpath d='M2 6L5 10L11 2' fill='none' stroke='%23222' stroke-width='1.5'/%3E%3C/svg%3E") center; }
.calc { height: 25px; margin-top: 9px; font-size: 13px; color: #444; border: 1px solid #a9acb4; border-radius: 3px; background: linear-gradient(#dcdee4, #b9bdc8); display: flex; align-items: center; justify-content: center; gap: 7px; }
.calc i { border: 3px solid transparent; border-top: 4px solid #333; border-bottom: 0; }
.time { flex: 1; min-width: 0; margin-right: 2px; display: flex; flex-direction: column; }
.ruler { height: 34px; position: relative; overflow: hidden; border-top: 2px solid #777; border-left: 1px solid #888; border-bottom: 2px solid #fff; }
.ruler svg { width: 100%; height: 14px; }
.ruler span { position: absolute; top: 14px; transform: translateX(-50%); font: bold 16px/18px var(--mono); }
.now { position: absolute; top: 0; bottom: 0; width: 1px; background: #e03030; }
.row { height: 54px; display: flex; gap: 5px; padding-top: 3px; align-items: flex-start; }
.pair { width: 70px; display: flex; flex-direction: column; gap: 2px; }
.pair input { width: 100%; height: 22px; }
.pair button { height: 20px; background: #666; color: #e6e6f2; font-weight: bold; font-size: 14px; }
.sel input { background: #e0e0fe; }
.end button { color: #fff; }
.transport { margin: 0 auto; width: 380px; height: 48px; border: 2px solid #979797; display: flex; align-items: center; padding: 0 12px 0 7px; justify-content: space-between; }
.speed { width: 44px; height: 23px; border: 1px solid #888; border-top-width: 2px; }
.speed input { width: 26px; padding-left: 7px; }
.clock { width: 86px; display: flex; flex-direction: column; align-items: center; gap: 3px; padding-bottom: 2px; }
.clock input { width: 100%; height: 20px; }
.clock b { font-size: 14px; }
.range { height: 24px; margin-right: 3px; position: relative; background: #e0e0fe; border: 2px solid #111; border-top: 3px double #777; border-left: 1px solid #888; }

/* Right column */
.right h2 { padding-left: 15px; }
.props { height: 243px; flex: none; border: 2px solid #a0a0a0; border-right: 0; background: #fff; display: flex; overflow: hidden; }
.ptable { flex: 1; height: 251px; font: 12px/16px var(--mono); }
.ptable tr { height: 20px; border-bottom: 1px solid #f1f1f1; }
.ptable td { padding: 0; }
.ptable td:first-child { width: 164px; padding-left: 18px; border-right: 1px solid #f1f1f1; }
.ptable td + td { padding-left: 4px; }
.ptable td.ck { padding-left: 2px; }
.ptable .cat { height: 22px; background: #f1f2f4; }
.ptable th { text-align: left; padding: 0; font-size: 14px; }
.ptable th i { display: inline-block; border: 4px solid transparent; border-right-color: #444; border-bottom-color: #444; margin: 0 7px 0 3px; }
.dim { color: #9a9a9a; }
.ck label { display: flex; gap: 8px; align-items: center; }
.ck input[type="checkbox"] { width: 14px; height: 14px; border: 1px solid #999; outline: 1px solid #bbb; outline-offset: -4px; background: #eee; }
.scroll { width: 19px; flex: none; background: #f3f3f5; display: flex; flex-direction: column; align-items: center; padding: 7px 0; }
.thumb { width: 17px; height: 169px; margin: 8px 0 auto; border: 1px solid #8296b8; border-radius: 2px; background: repeating-linear-gradient(#777 0 1px, #e8ecf4 1px 3px) center / 10px 9px no-repeat, linear-gradient(90deg, #e6edf6, #b9c6da); }
.markers { flex: 1; min-height: 0; display: flex; }
.rtabs { width: 31px; flex: none; background: #c8ccd7; padding-left: 3px; display: flex; flex-direction: column; border-right: 1px solid #8a8a8a; }
.rtab {
  position: relative;
  isolation: isolate;
  writing-mode: vertical-rl;
  width: 27px;
  margin-bottom: -8px;
  font-size: 16px;
  line-height: 24px;
  text-align: left;
  padding: 9px 0 0;
}
.rtab::before, .rtab::after { content: ""; position: absolute; inset: 0; z-index: -2; background: #8d9099; clip-path: polygon(5px 0, 100% 0, 100% 100%, 50% calc(100% - 18px), 20% calc(100% - 24px), 0 calc(100% - 34px), 0 5px); }
.rtab::after { inset: 1px 0 1px 1px; z-index: -1; background: linear-gradient(90deg, #e2e6ec 50%, #d4d4d4); }
.rtab.on { font-weight: bold; z-index: 7; height: 87px; padding-top: 6px; }
.rtab.on::after { background: #f0f0f2; }
.rtab:nth-child(2) { height: 94px; z-index: 6; }
.rtab:nth-child(3) { height: 64px; z-index: 5; }
.rtab:nth-child(4) { height: 99px; z-index: 4; }
.rtab:nth-child(5) { height: 126px; z-index: 3; }
.rtab:nth-child(6) { height: 98px; z-index: 2; }
.list { flex: 1; background: #ababab; border-top: 2px solid #8a8a8a; border-left: 1px solid #999; }
.mtable { width: 100%; height: 147px; background: #000; }
.mtable th { background: #fff; font-weight: normal; text-align: left; padding: 0 0 0 8px; color: #333; height: 23px; }
.mtable th:first-child { width: 25px; }
.mtable td, .mtable th { border-bottom: 1px solid #b4b4b4; border-right: 1px solid #b4b4b4; }
.mtable td { padding: 0 4px; }
.mtable td:first-child { text-align: right; }
.m1 { color: #b8e070; } .m2 { color: #e04ce0; } .m3 { color: #d2b03c; } .m4 { color: #58d8e0; }
.m5 { background: #27e22f; color: #14401a; } .m6 { color: #fff; }
.detail { height: 265px; flex: none; border: 2px solid #a0a0a0; border-right: 0; border-bottom-width: 1px; background: #fff; }
.dtable { width: 100%; height: 207px; font: 12px/16px var(--mono); table-layout: fixed; }
.gut { width: 24px; }
.key { width: 136px; }
.dtable td, .dtable th { padding: 0 0 0 4px; border-bottom: 1px solid #f1f2f6; text-align: left; }
.dtable td:first-child { background: #f3f6fd; padding-left: 7px; }
.dtable tr:not(.cat) td:nth-child(2) { border-right: 1px solid #eceef4; }
.dtable th, .dtable b { font-size: 14px; font-weight: bold; }
.dtable .cat { background: #f3f6fd; }
.dtable .cat i { display: block; width: 8px; height: 8px; border: solid #444; border-width: 0 2px 2px 0; transform: rotate(45deg); margin-top: -4px; }
.dtable .cur td:nth-child(2) { background: #f3f6fd; }
.dtable .dim { color: #777; }
.sw i { display: inline-block; width: 25px; height: 15px; border: 1px solid #111; background: #27de33; vertical-align: middle; margin: 0 9px 0 -2px; }
.cuts { flex: none; height: 53px; display: flex; gap: 3px; padding: 4px 0 0 58px; }
.cuts button { width: 44px; height: 44px; border: 2px solid #bcbcbc; outline: 1px solid #ddd; outline-offset: -3px; background: #fff; font: 12px var(--mono); display: flex; align-items: center; justify-content: center; }
.cuts svg { width: 36px; height: 36px; }

/* Status bar */
.status { height: 26px; flex: none; display: flex; gap: 3px; border-top: 2px solid #777; border-bottom: 2px solid #fafafa; padding-right: 16px; font: 15px/20px "Open Sans", "Noto Sans", sans-serif; }
.status span { border-left: 2px solid #888; border-top: 1px solid #aaa; border-right: 1px solid #fff; padding: 0 5px 0 4px; }
.status .log { flex: 1; border: 0; padding-left: 0; margin-left: -3px; }
```
